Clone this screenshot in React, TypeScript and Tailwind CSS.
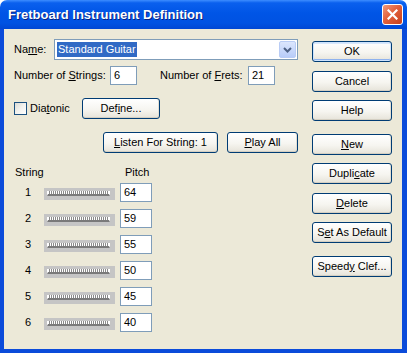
import React from "react";

const btn =
  "flex h-[21px] items-center justify-center rounded-[3px] border border-[#003C74] bg-[linear-gradient(to_bottom,#FFFFFF_0%,#F6F5F0_55%,#E6E3D9_100%)] text-[11px] text-black shadow-[inset_0_-1px_0_#D4CFC2,inset_-1px_0_0_#E2DFD4]";

function Key({ children }: { children: React.ReactNode }) {
  return <span className="underline decoration-1 underline-offset-[1px]">{children}</span>;
}

function Button({
  children,
  className = "",
  isDefault = false,
}: {
  children: React.ReactNode;
  className?: string;
  isDefault?: boolean;
}) {
  return (
    <button
      type="button"
      className={`${btn} ${isDefault ? "shadow-[inset_0_0_0_1px_#CEE3FC,inset_0_-2px_0_#8FB2EE,inset_0_2px_0_#D8E8FC]" : ""} ${className}`}
    >
      <span>{children}</span>
    </button>
  );
}

function Slider() {
  return (
    <div className="mt-[2px] flex h-[12px] w-[71px] items-center bg-[#C5C5C5]">
      <div className="ml-[3px] h-[5px] w-[63px] border-x border-white border-b-2 border-b-[#7A7A7A] bg-[repeating-linear-gradient(90deg,#FFFFFF_0_1px,#8A8A8A_1px_2px)]" />
    </div>
  );
}

function Field({ value, className = "" }: { value: string; className?: string }) {
  return (
    <div className={`flex h-[19px] items-center border border-[#7F9DB9] bg-white pl-[3px] ${className}`}>
      {value}
    </div>
  );
}

const strings = [
  { n: "1", pitch: "64" },
  { n: "2", pitch: "59" },
  { n: "3", pitch: "55" },
  { n: "4", pitch: "50" },
  { n: "5", pitch: "45" },
  { n: "6", pitch: "40" },
];

export default function App() {
  return (
    <div className="flex h-[353px] w-[407px] flex-col font-['Liberation_Sans',Arial,sans-serif] text-[11px] leading-[13px] text-black">
      {/* title bar */}
      <div className="flex h-[29px] shrink-0 items-center justify-between rounded-t-[7px] bg-[linear-gradient(to_bottom,#3D8DFF_0%,#0A60EE_10%,#0055E6_45%,#0052E2_80%,#0047D4_100%)] pl-[8px] pr-[4px]">
        <span className="text-[13px] font-bold leading-[16px] text-white [text-shadow:1px_1px_0_#0A2280]">
          Fretboard Instrument Definition
        </span>
        <div className="flex h-[21px] w-[21px] items-center justify-center rounded-[3px] border border-white bg-[linear-gradient(135deg,#F09A7C_0%,#E2603B_45%,#C8401C_100%)]">
          <svg width="11" height="11" viewBox="0 0 11 11">
            <path d="M1.5 1.5 L9.5 9.5 M9.5 1.5 L1.5 9.5" stroke="#FFFFFF" strokeWidth="2.2" strokeLinecap="square" />
          </svg>
        </div>
      </div>

      {/* body */}
      <div className="flex flex-1 border-b-4 border-l-4 border-r-[5px] border-[#0B4BDA] bg-[#ECE9D8] px-[10px]">
        {/* left column */}
        <div className="flex w-[284px] flex-col pt-[10px]">
          <div className="flex h-[21px] items-center">
            <span className="w-[40px]">
              Na<Key>m</Key>e:
            </span>
            <div className="flex h-[21px] flex-1 items-center border border-[#7F9DB9] bg-white pl-[2px] pr-[1px]">
              <span className="bg-[#316AC5] px-[1px] py-[1px] text-white">Standard Guitar</span>
              <div className="ml-auto flex h-[17px] w-[17px] items-center justify-center rounded-[2px] border border-[#B9CCF5] bg-[linear-gradient(to_bottom,#DCE6FD,#B7CCF9)]">
                <svg width="9" height="6" viewBox="0 0 9 6">
                  <path d="M1 1 L4.5 4.5 L8 1" fill="none" stroke="#4D6185" strokeWidth="2" />
                </svg>
              </div>
            </div>
          </div>

          <div className="mt-[6px] flex h-[19px] items-center">
            <span className="w-[96px]">
              Number of <Key>S</Key>trings:
            </span>
            <Field value="6" className="w-[27px]" />
            <span className="ml-[23px] w-[88px]">
              Number of <Key>F</Key>rets:
            </span>
            <Field value="21" className="w-[27px]" />
          </div>

          <div className="mt-[13px] flex h-[21px] items-center">
            <div className="h-[13px] w-[13px] border border-[#1C5180] bg-[linear-gradient(135deg,#DCDBD5_0%,#F2F2EE_50%,#FFFFFF_100%)]" />
            <span className="ml-[3px] w-[52px]">
              Dia<Key>t</Key>onic
            </span>
            <Button className="w-[78px]">
              Def<Key>i</Key>ne...
            </Button>
          </div>

          <div className="mt-[13px] flex justify-end">
            <Button className="w-[115px]">
              <Key>L</Key>isten For String: 1
            </Button>
            <Button className="ml-[9px] w-[71px]">
              <Key>P</Key>lay All
            </Button>
          </div>

          <div className="mt-[13px] flex h-[13px]">
            <span className="w-[111px] pl-[1px]">String</span>
            <span>Pitch</span>
          </div>

          <div className="mt-[4px] flex flex-col gap-[7px]">
            {strings.map((s) => (
              <div key={s.n} className="flex h-[19px] items-center">
                <span className="w-[30px] pl-[11px]">{s.n}</span>
                <Slider />
                <Field value={s.pitch} className="ml-[5px] w-[32px]" />
              </div>
            ))}
          </div>
        </div>

        {/* right column */}
        <div className="ml-[14px] flex w-[80px] flex-col pt-[12px]">
          <Button isDefault>OK</Button>
          <Button className="mt-[9px]">Cancel</Button>
          <Button className="mt-[8px]">Help</Button>
          <Button className="mt-[13px]">
            <Key>N</Key>ew
          </Button>
          <Button className="mt-[8px]">
            Dupli<Key>c</Key>ate
          </Button>
          <Button className="mt-[9px]">
            <Key>D</Key>elete
          </Button>
          <Button className="mt-[8px]">
            S<Key>e</Key>t As Default
          </Button>
          <Button className="mt-[13px]">
            Speed<Key>y</Key> Clef...
          </Button>
        </div>
      </div>
    </div>
  );
}
